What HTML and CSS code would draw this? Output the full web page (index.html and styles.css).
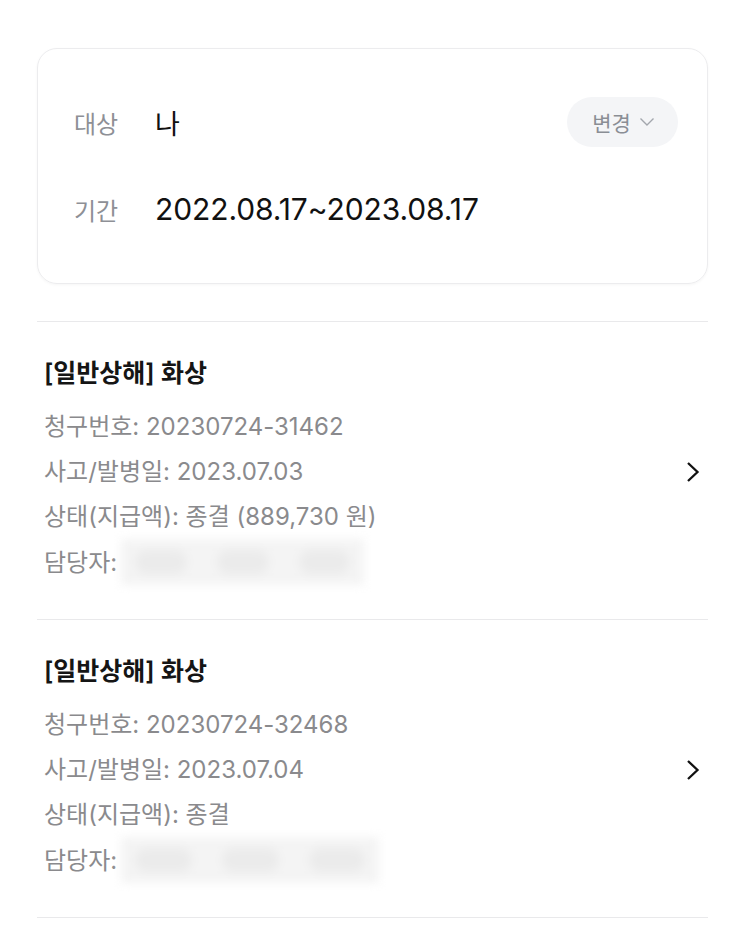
FILE: index.html
```html
<!DOCTYPE html>
<html lang="ko">
<head>
<meta charset="utf-8">
<link rel="stylesheet" href="styles.css">
</head>
<body>
<div class="page">
  <section class="card">
    <div class="row">
      <span class="label">대상</span>
      <span class="value who">나</span>
      <button class="pill">변경
        <svg class="down" viewBox="0 0 16 10" width="16" height="10"><path d="M1.5 1.5 L8 8 L14.5 1.5" fill="none" stroke="#a3a7ad" stroke-width="1.4"/></svg>
      </button>
    </div>
    <div class="row">
      <span class="label">기간</span>
      <span class="value date">2022.08.17~2023.08.17</span>
    </div>
  </section>

  <ul class="list">
    <li class="item">
      <div class="info">
        <div class="title">[일반상해] 화상</div>
        <div class="line">청구번호: 20230724-31462</div>
        <div class="line">사고/발병일: 2023.07.03</div>
        <div class="line">상태(지급액): 종결 (889,730 원)</div>
        <div class="line">담당자: <span class="blur b1"><i></i><i></i><i></i></span></div>
      </div>
      <svg class="chev" viewBox="0 0 14 22" width="14" height="22"><path d="M2 2 L11.5 11 L2 20" fill="none" stroke="#111" stroke-width="2.3"/></svg>
    </li>
    <li class="item">
      <div class="info">
        <div class="title">[일반상해] 화상</div>
        <div class="line">청구번호: 20230724-32468</div>
        <div class="line">사고/발병일: 2023.07.04</div>
        <div class="line">상태(지급액): 종결</div>
        <div class="line">담당자: <span class="blur b2"><i></i><i></i><i></i></span></div>
      </div>
      <svg class="chev" viewBox="0 0 14 22" width="14" height="22"><path d="M2 2 L11.5 11 L2 20" fill="none" stroke="#111" stroke-width="2.3"/></svg>
    </li>
  </ul>
</div>
</body>
</html>
```
FILE: styles.css
```css
* { box-sizing: border-box; }
html, body { margin: 0; padding: 0; background: #fff; }
body {
  font-family: Inter, "Noto Sans CJK KR", sans-serif;
  color: #111;
}
.page { padding: 48px 35px 0 37px; }
.card {
  border: 1px solid #ececee;
  border-radius: 20px;
  box-shadow: 0 1px 3px rgba(0,0,0,0.04);
  padding: 48px 29px 49px 36px;
  display: flex;
  flex-direction: column;
  gap: 37px;
}
.row {
  display: flex;
  align-items: center;
  height: 50px;
}
.label {
  width: 81px;
  font-size: 24px;
  color: #8e9096;
  flex: none;
}
.value { flex: 1; color: #111; }
.who { font-size: 27px; }
.date { font-size: 30px; letter-spacing: -0.1px; }
.pill {
  flex: none;
  height: 50px;
  width: 111px;
  border: none;
  border-radius: 25px;
  background: #f4f5f7;
  color: #8a8e95;
  font-family: inherit;
  font-size: 21px;
  display: flex;
  align-items: center;
  justify-content: center;
  gap: 8px;
  padding: 0 0 0 2px;
}
.down { display: block; }
.list {
  list-style: none;
  margin: 37px 0 0;
  padding: 0;
}
.item {
  border-top: 1px solid #e9e9eb;
  padding: 36px 8px 34px 7px;
  display: flex;
  align-items: center;
}
.item:last-child { border-bottom: 1px solid #e9e9eb; }
.info { flex: 1; }
.title {
  font-size: 25px;
  font-weight: 600;
  line-height: 30px;
  margin-bottom: 16px;
  color: #151515;
}
.line {
  font-size: 24px;
  line-height: 45px;
  color: #8a8a8d;
  display: flex;
  align-items: center;
}
.blur {
  display: inline-flex;
  align-items: center;
  gap: 30px;
  height: 46px;
  margin-left: 4px;
  padding: 0 14px;
  background: #f4f4f4;
  filter: blur(5px);
}
.b1 { width: 243px; }
.b2 { width: 258px; }
.blur i {
  display: block;
  height: 24px;
  flex: 1;
  border-radius: 12px;
  background: #ebebeb;
}
.chev { flex: none; display: block; }
```
